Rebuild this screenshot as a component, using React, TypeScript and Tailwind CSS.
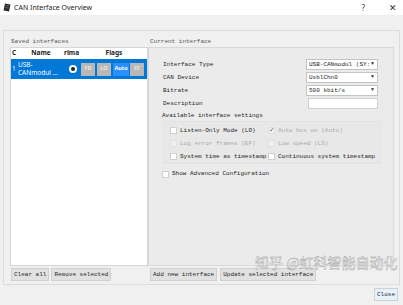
import React from 'react';

const mono = "font-['Liberation_Mono',monospace] text-[6px] leading-none text-[#1e1e1e]";
const sans = "font-['Noto_Sans','Liberation_Sans',sans-serif]";

const Combo = ({ value }: { value: string }) => (
  <div className="w-[72px] h-[11px] bg-white border border-[#c3c3c3] flex items-center justify-between pl-[2px] pr-[3px]">
    <span className="whitespace-nowrap overflow-hidden">{value}</span>
    <span className="text-[5px] text-[#333]">▼</span>
  </div>
);

const Check = ({ checked = false, disabled = false }: { checked?: boolean; disabled?: boolean }) => (
  <span
    className={`w-[7px] h-[7px] shrink-0 border flex items-center justify-center ${
      disabled ? 'border-[#e0e0e0] bg-[#f0f0f0]' : 'border-[#cfcfcf] bg-white'
    }`}
  >
    {checked && <span className="text-[7px] leading-none text-[#444]">✓</span>}
  </span>
);

const Option = ({ label, checked, disabled }: { label: string; checked?: boolean; disabled?: boolean }) => (
  <div className="flex items-center gap-[3px]">
    <Check checked={checked} disabled={disabled} />
    <span className={disabled ? 'text-[#a8a8a8]' : ''}>{label}</span>
  </div>
);

const Btn = ({ children, className = '' }: { children: React.ReactNode; className?: string }) => (
  <button className={`h-[13px] px-[2px] bg-[#e1e1e1] border border-[#d0d0d0] flex items-center ${className}`}>
    {children}
  </button>
);

const Flag = ({ text, active = false }: { text: string; active?: boolean }) => (
  <span
    className={`h-[13px] shrink-0 flex items-center justify-center text-[5.5px] font-bold ${
      active ? 'w-[16px] bg-[#2b8fff] text-white' : 'w-[14px] bg-[#b8b8b8] text-[#e6e6e6]'
    }`}
  >
    {text}
  </span>
);

export default function App() {
  return (
    <div className={`w-[403px] h-[305px] bg-[#f0f0f0] flex flex-col relative overflow-hidden ${mono}`}>
      {/* Title bar */}
      <div className={`h-[15px] bg-white flex items-center pl-[3px] pr-[6px] ${sans}`}>
        <svg width="8" height="9" viewBox="0 0 8 9" className="mr-[3px]">
          <path d="M2 0.5 L7.5 1.5 L6 8.5 L0.5 7.5 Z" fill="#2d2d2d" />
          <path d="M3 2.5 L6 3 M2.6 4.5 L5.6 5" stroke="#888" strokeWidth="0.6" />
        </svg>
        <span className="text-[7px] text-[#222]">CAN Interface Overview</span>
        <span className="ml-auto text-[8px] text-[#333] mr-[24px]">?</span>
        <span className="text-[9px] text-[#333]">✕</span>
      </div>

      <div className="pt-[15px] px-[3px]">
        {/* Outer frame */}
        <div className="h-[255px] border border-[#dcdcdc] flex pl-[6px] pr-[5px] pt-[5px]">
          {/* Saved interfaces */}
          <div className="w-[138px] flex flex-col">
            <div className="h-[11px] flex items-center pl-[1px] text-[#555]">Saved interfaces</div>
            <div className="h-[219px] bg-white border border-[#d6d6d6] flex flex-col">
              <div className={`h-[11px] flex items-center text-[6.5px] font-bold text-[#222] ${sans}`}>
                <span className="w-[7px] pl-[1px]">C</span>
                <span className="w-[46px] text-center">Name</span>
                <span className="w-[17px] overflow-hidden whitespace-nowrap">rima</span>
                <span className="flex-1 text-center">Flags</span>
              </div>
              <div className={`h-[20px] bg-[#0078d7] flex items-center text-white text-[6.5px] ${sans}`}>
                <span className="w-[7px] pl-[1px]">1</span>
                <div className="w-[46px] flex flex-col leading-[8px]">
                  <span>USB-</span>
                  <span>CANmodul ...</span>
                </div>
                <span className="w-[17px] flex justify-center">
                  <span className="w-[8px] h-[8px] rounded-full bg-white flex items-center justify-center">
                    <span className="w-[4px] h-[4px] rounded-full bg-[#222]" />
                  </span>
                </span>
                <div className="flex items-center">
                  <Flag text="FD" />
                  <span className="w-[2px]" />
                  <Flag text="LO" />
                  <span className="w-[2px]" />
                  <Flag text="Auto" active />
                  <span className="w-[1px]" />
                  <Flag text="EF" />
                </div>
              </div>
            </div>
            <div className="mt-[2px] flex gap-[2px] pl-[1px]">
              <Btn>Clear all</Btn>
              <Btn>Remove selected</Btn>
            </div>
          </div>

          {/* Current interface */}
          <div className="flex-1 flex flex-col">
            <div className="h-[11px] flex items-center pl-[2px] text-[#555]">Current interface</div>
            <div className="h-[219px] bg-[#ebebeb] border border-[#d8d8d8] pt-[10px] pl-[14px] pr-[15px] flex flex-col">
              {[
                ['Interface Type', 'USB-CANmodul (SY:'],
                ['CAN Device', 'UsblChn0'],
                ['Bitrate', '500 kbit/s'],
              ].map(([label, value]) => (
                <div key={label} className="h-[13px] flex items-center justify-between">
                  <span>{label}</span>
                  <Combo value={value} />
                </div>
              ))}
              <div className="h-[13px] flex items-center justify-between">
                <span>Description</span>
                <div className="w-[70px] h-[11px] bg-white border border-[#d0d0d0]" />
              </div>
              <div className="h-[11px] flex items-center -ml-[1px]">Available interface settings</div>
              <div className="h-[43px] mr-[-3px] border border-[#e2e2e2] bg-[#e8e8e8] pl-[6px] pt-[2px] grid grid-cols-[98px_1fr] auto-rows-[13px] items-center">
                <Option label="Listen-Only Mode (LO)" />
                <Option label="Auto bus on (Auto)" checked disabled />
                <Option label="Log error frames (EF)" disabled />
                <Option label="Low speed (LS)" disabled />
                <Option label="System time as timestamp" />
                <Option label="Continuous system timestamp" />
              </div>
              <div className="h-[12px] mt-[4px] -ml-[1px] flex items-center">
                <Option label="Show Advanced Configuration" />
              </div>
            </div>
            <div className="mt-[2px] flex gap-[3px] pl-[2px]">
              <Btn>Add new interface</Btn>
              <Btn>Update selected interface</Btn>
            </div>
          </div>
        </div>

        <div className="flex justify-end pr-[2px] mt-[3px]">
          <Btn className="h-[12px] border-[#0078d7] bg-[#e5f1fb]">Close</Btn>
        </div>
      </div>

      {/* Watermark */}
      <div className="absolute left-[255px] top-[255px] text-[14px] leading-none font-['Noto_Sans_CJK_SC',sans-serif] text-white/80 [-webkit-text-stroke:0.4px_#999999] whitespace-nowrap">
        知乎 @虹科智能自动化
      </div>
    </div>
  );
}
